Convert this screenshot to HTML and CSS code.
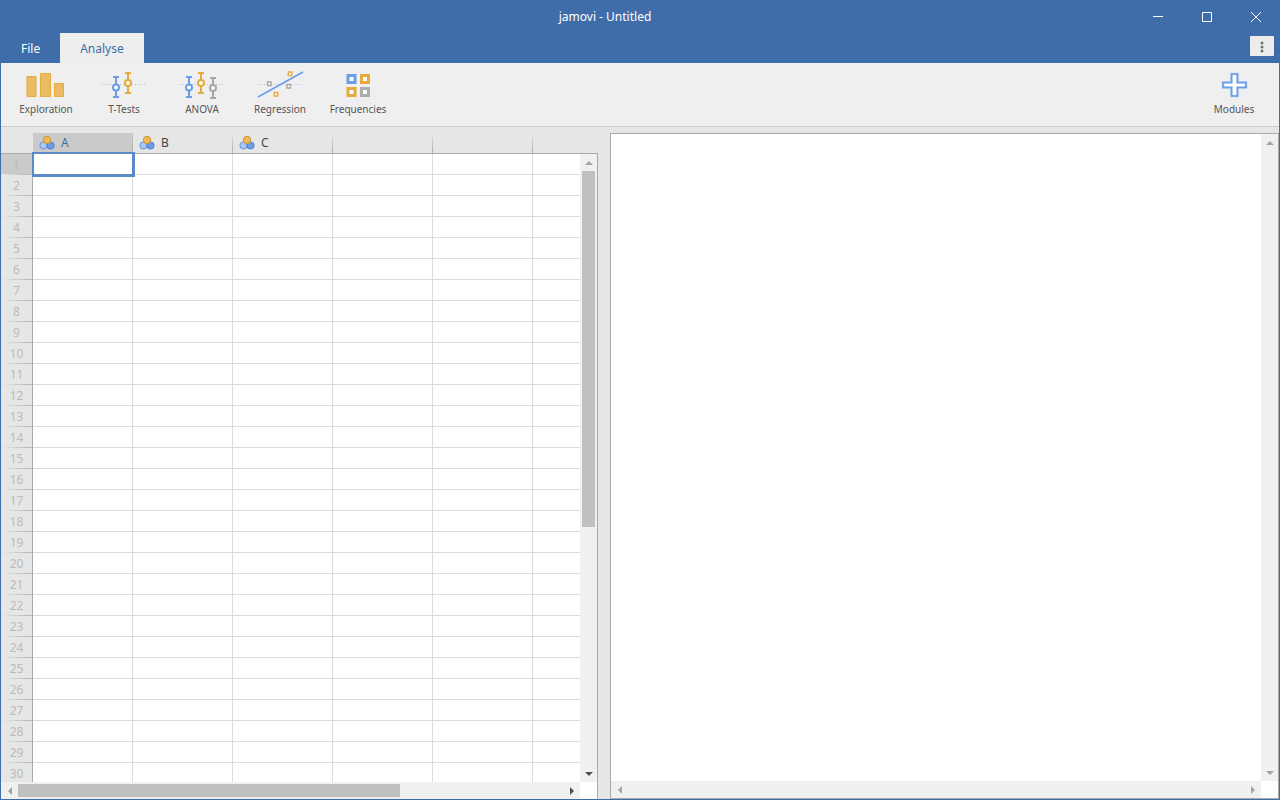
FILE: index.html
```html
<!DOCTYPE html>
<html lang="en">
<head>
<meta charset="utf-8">
<title>jamovi - Untitled</title>
<link rel="stylesheet" href="styles.css">
</head>
<body>
<div class="window">
  <header class="titlebar">
    <h1 class="title">jamovi - Untitled</h1>
    <div class="window-controls">
      <button type="button" aria-label="Minimize"><svg width="12" height="12" viewBox="0 0 12 12"><path d="M1 5.500h10"/></svg></button>
      <button type="button" aria-label="Maximize"><svg width="12" height="12" viewBox="0 0 12 12"><path d="M1.500 1.500h9v9h-9z"/></svg></button>
      <button type="button" aria-label="Close"><svg width="12" height="12" viewBox="0 0 12 12"><path d="M1 1l10 10M11 1L1 11"/></svg></button>
    </div>
  </header>
  <nav class="tabs">
    <button type="button" class="tab">File</button>
    <button type="button" class="tab tab-active">Analyse</button>
    <button type="button" class="more" aria-label="Options"><svg width="4" height="12" viewBox="0 0 4 12"><circle cx="2" cy="2" r="1.500"/><circle cx="2" cy="6" r="1.500"/><circle cx="2" cy="10" r="1.500"/></svg></button>
  </nav>
  <div class="toolbar">
    <button type="button" class="tool">
      <svg width="48" height="32" viewBox="0 0 48 32"><g fill="#eabb63" stroke="#e6ab3e"><path d="M5 7.500h9v20H5z"/><path d="M18.500 4.500h10v23h-10z"/><path d="M32.500 14.500h9v13h-9z"/></g></svg>
      <span>Exploration</span>
    </button>
    <button type="button" class="tool">
      <svg width="48" height="32" viewBox="0 0 48 32"><path class="dots" d="M2 15.500h45"/><g class="whisker blue"><path d="M13 8h6M16 8v20M13 28h6"/><circle cx="16" cy="18.500" r="3"/></g><g class="whisker gold"><path d="M25 4h6M28 4v20M25 24h6"/><circle cx="28" cy="14" r="3"/></g></svg>
      <span>T-Tests</span>
    </button>
    <button type="button" class="tool">
      <svg width="48" height="32" viewBox="0 0 48 32"><path class="dots" d="M2 15.500h45"/><g class="whisker blue"><path d="M8 8h6M11 8v20M8 28h6"/><circle cx="11" cy="18.500" r="3"/></g><g class="whisker gold"><path d="M20 4h6M23 4v20M20 24h6"/><circle cx="23" cy="14" r="3"/></g><g class="whisker gray"><path d="M32 9h6M35 9v20M32 29h6"/><circle cx="35" cy="19" r="3"/></g></svg>
      <span>ANOVA</span>
    </button>
    <button type="button" class="tool">
      <svg width="48" height="32" viewBox="0 0 48 32"><path class="dots" d="M2 15.500h45"/><path d="M2 28L47 3" fill="none" stroke="#6b9de8" stroke-width="1.700"/><g fill="#fff" stroke-width="1.400"><g stroke="#a6a6a6"><path d="M11.500 13h3.500v3.500h-3.500z"/><path d="M31 15.500h3.500v3.500H31z"/></g><g stroke="#e6ab3e"><path d="M18.300 23.500h3.500V27h-3.500z"/><path d="M32.300 3h3.500v3.500h-3.500z"/></g></g></svg>
      <span>Regression</span>
    </button>
    <button type="button" class="tool">
      <svg width="48" height="32" viewBox="0 0 48 32"><g fill="#fff" stroke-width="3"><path stroke="#6b9de8" d="M14 6.500h7v7h-7z"/><path stroke="#e6ab3e" d="M27.500 6.500h7v7h-7z"/><path stroke="#e6ab3e" d="M14 19.500h7v7h-7z"/><path stroke="#adadad" d="M27.500 19.500h7v7h-7z"/></g></svg>
      <span>Frequencies</span>
    </button>
    <button type="button" class="tool tool-modules">
      <svg width="48" height="32" viewBox="0 0 48 32"><path d="M21.500 5h6v8.500H36v5h-8.500V27h-6v-8.500H13v-5h8.500z" fill="#fff" stroke="#b9d0f3" stroke-width="2.500"/><path d="M21.500 5h6v8.500H36v5h-8.500V27h-6v-8.500H13v-5h8.500z" fill="none" stroke="#6b9de8" stroke-width="1.600"/></svg>
      <span>Modules</span>
    </button>
  </div>
  <main class="workspace">
    <section class="data" aria-label="Data">
      <div class="sheet">
        <table id="grid">
          <colgroup><col class="col-index"><col><col><col><col><col><col></colgroup>
          <thead><tr><th></th><th class="active"><span class="heading">A</span></th><th><span class="heading">B</span></th><th><span class="heading">C</span></th><th></th><th></th><th></th></tr></thead>
          <tbody></tbody>
        </table>
      </div>
      <div class="head-fill"></div>
      <div class="scroll scroll-v">
        <button type="button" aria-label="Scroll up"><svg width="8" height="4" viewBox="0 0 8 4"><path fill="#a3a3a3" d="M0 4l4-4 4 4z"/></svg></button>
        <div class="track"><div class="thumb"></div></div>
        <button type="button" aria-label="Scroll down"><svg width="8" height="4" viewBox="0 0 8 4"><path fill="#505050" d="M0 0h8L4 4z"/></svg></button>
      </div>
      <div class="scroll scroll-h">
        <button type="button" aria-label="Scroll left"><svg width="4" height="8" viewBox="0 0 4 8"><path fill="#a3a3a3" d="M4 0v8L0 4z"/></svg></button>
        <div class="track"><div class="thumb"></div></div>
        <button type="button" aria-label="Scroll right"><svg width="4" height="8" viewBox="0 0 4 8"><path fill="#505050" d="M0 0v8l4-4z"/></svg></button>
      </div>
      <div class="corner"></div>
    </section>
    <section class="results" aria-label="Results">
      <div class="page"></div>
      <div class="scroll scroll-v">
        <button type="button" aria-label="Scroll up"><svg width="8" height="4" viewBox="0 0 8 4"><path fill="#a3a3a3" d="M0 4l4-4 4 4z"/></svg></button>
        <div class="track"></div>
        <button type="button" aria-label="Scroll down"><svg width="8" height="4" viewBox="0 0 8 4"><path fill="#a3a3a3" d="M0 0h8L4 4z"/></svg></button>
      </div>
      <div class="scroll scroll-h">
        <button type="button" aria-label="Scroll left"><svg width="4" height="8" viewBox="0 0 4 8"><path fill="#a3a3a3" d="M4 0v8L0 4z"/></svg></button>
        <div class="track"></div>
        <button type="button" aria-label="Scroll right"><svg width="4" height="8" viewBox="0 0 4 8"><path fill="#a3a3a3" d="M0 0v8l4-4z"/></svg></button>
      </div>
    </section>
  </main>
</div>
<script src="grid.js"></script>
</body>
</html>
```
FILE: styles.css
```css
* { box-sizing: border-box; }
body {
  margin: 0;
  font-family: "Noto Sans", "Open Sans", sans-serif;
  font-size: 12px;
  color: #444;
}
button {
  margin: 0;
  padding: 0;
  border: 0;
  background: none;
  font: inherit;
  color: inherit;
}
svg { display: block; }
.window {
  display: flex;
  flex-direction: column;
  height: 100vh;
  border: 1px solid #3e6da9;
  border-top: 0;
  background: #e6e6e6;
}
.titlebar {
  display: grid;
  grid-template-columns: 1fr auto 1fr;
  align-items: center;
  height: 33px;
  background: #3e6da9;
  color: #fff;
}
.title {
  grid-column: 2;
  margin: 0 70px 0 0;
  font-size: 12px;
  font-weight: 400;
  line-height: 33px;
}
.window-controls {
  display: flex;
  justify-content: flex-end;
  gap: 3px;
}
.window-controls button {
  display: grid;
  place-items: center;
  width: 46px;
  height: 32px;
}
.window-controls svg { fill: none; stroke: #fff; }
.tabs {
  display: flex;
  height: 30px;
  padding-right: 5px;
  background: #3e6da9;
  color: #fff;
}
.tab { height: 30px; padding: 0 20px; }
.tab-active { background: #eee; color: #3e6da9; }
.more {
  display: grid;
  place-items: center;
  width: 24px;
  height: 20px;
  margin: 3px 0 0 auto;
  padding-top: 2px;
  border-radius: 1px;
  background: #ececec;
}
.more svg { fill: #707070; }
.toolbar {
  display: flex;
  height: 64px;
  padding: 6px 6px 0;
  border-bottom: 1px solid #ccc;
  background: #efefef;
}
.tool {
  display: flex;
  flex-direction: column;
  align-items: center;
  width: 78px;
  font-size: 10px;
  line-height: 16px;
  color: #555;
}
.tool-modules { margin-left: auto; }
.dots { fill: none; stroke: #b8c4dc; stroke-dasharray: 1 2; }
.whisker { stroke-width: 2; fill: #fff; }
.blue { stroke: #6b9de8; }
.gold { stroke: #e6ab3e; }
.gray { stroke: #a6a6a6; }
.workspace {
  display: flex;
  flex: 1;
  gap: 12px;
  min-height: 0;
  padding-top: 6px;
}
.data {
  display: grid;
  flex: 597 1 0;
  grid-template-columns: 1fr 18px;
  grid-template-rows: 21px 1fr 17px;
  min-width: 0;
}
.sheet {
  grid-row: 1 / 3;
  grid-column: 1;
  min-width: 0;
  min-height: 0;
  overflow: hidden;
}
table {
  width: 632px;
  table-layout: fixed;
  border-collapse: separate;
  border-spacing: 0;
}
col { width: 100px; }
.col-index { width: 32px; }
th, td { height: 21px; padding: 0; }
thead th {
  border-bottom: 1px solid #aaa;
  background: linear-gradient(to top, #aaa, #e6e6e6) right / 1px 100% no-repeat;
  font-weight: 400;
  text-align: left;
}
thead th:first-child { background: none; }
thead .active {
  background-color: #cacaca;
  background-image: linear-gradient(to top, #aaa, #cacaca);
  color: #3e6da9;
}
.heading {
  display: flex;
  align-items: center;
  gap: 6px;
  height: 20px;
  padding-left: 6px;
  line-height: 22px;
}
.heading svg { flex: none; }
tbody th {
  padding-top: 1px;
  border-right: 1px solid #aaa;
  background: linear-gradient(to right, #e6e6e6, #b4b4b4) bottom / 100% 1px no-repeat #e6e6e6;
  color: #bbb;
  font-weight: 400;
  line-height: 20px;
}
tbody .active { background-color: #cacaca; }
td {
  border-right: 1px solid #dcdcdc;
  border-bottom: 1px solid #dcdcdc;
  background: #fff;
}
.selected { position: relative; }
.selected::after {
  position: absolute;
  inset: -2px -3px -3px -1px;
  z-index: 1;
  border: 3px solid #5b8ac6;
  border-width: 2px 3px 3px 2px;
  content: "";
}
.head-fill { border-bottom: 1px solid #aaa; }
.scroll { display: flex; background: #f0f0f0; }
.scroll-v {
  grid-row: 2;
  grid-column: 2;
  flex-direction: column;
}
.data .scroll-v, .corner { border-right: 1px solid #aaa; }
.scroll-h { grid-row: 3; grid-column: 1; }
.scroll button {
  display: grid;
  place-items: center;
  width: 17px;
  height: 17px;
}
.track { flex: 1; padding: 0 2px; }
.scroll-h .track { padding: 2px 0; }
.thumb { height: 60%; background: #c0c0c0; }
.scroll-h .thumb { width: 70%; height: 100%; }
.corner { background: #fff; }
.results {
  display: grid;
  flex: 667 1 0;
  grid-template-columns: 1fr 17px;
  grid-template-rows: 1fr 17px;
  border: 1px solid #aaa;
  background: #fff;
}
.results .scroll-v { grid-row: 1; }
.results .scroll-h { grid-row: 2; }
```
FILE: grid.js
```js
const nominalIcon = `<svg width="16" height="16" viewBox="0 0 16 16" aria-hidden="true">
  <circle cx="4.500" cy="10.500" r="3.600" fill="#a9c7f3" stroke="#6b95d8"/>
  <circle cx="11.500" cy="10.500" r="3.600" fill="#6b9de8" stroke="#4d7fcd"/>
  <circle cx="8" cy="5" r="3.700" fill="#efb85a" stroke="#cf962f"/>
</svg>`;
document.querySelectorAll(".heading").forEach(heading => {
  heading.insertAdjacentHTML("afterbegin", nominalIcon);
});

const body = document.querySelector("#grid tbody");
for (let row = 1; row <= 30; row++) {
  const tr = body.insertRow();
  const index = document.createElement("th");
  index.textContent = row;
  tr.append(index);
  for (let column = 0; column < 6; column++) {
    const cell = tr.insertCell();
    if (row === 1 && column === 0) {
      index.className = "active";
      cell.className = "selected";
    }
  }
}
```
